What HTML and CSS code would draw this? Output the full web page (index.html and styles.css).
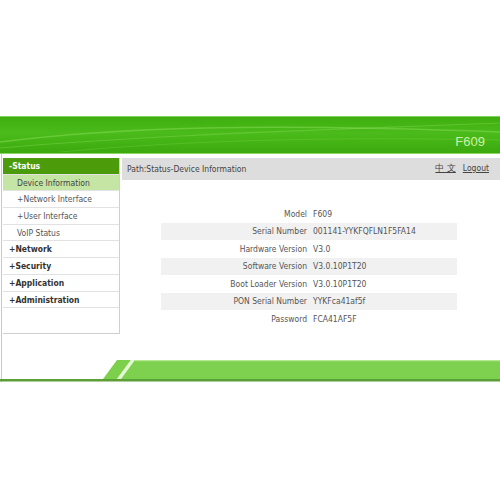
FILE: index.html
```html
<!DOCTYPE html>
<html lang="en">
<head>
  <meta charset="UTF-8">
  <title>F609</title>
  <link rel="stylesheet" href="styles.css">
</head>
<body>
  <div class="page">
    <!-- 상단 배너 -->
    <div class="banner">
      <svg class="waves" width="500" height="35" viewBox="0 0 500 35" preserveAspectRatio="none">
        <path d="M0 25 C120 10 260 6 500 15" stroke="#8fe060" stroke-opacity="0.45" stroke-width="1.5" fill="none"/>
        <path d="M0 31 C150 18 300 14 500 6" stroke="#8fe060" stroke-opacity="0.35" stroke-width="1.2" fill="none"/>
        <path d="M60 35 C200 22 350 20 500 23" stroke="#7dd850" stroke-opacity="0.3" stroke-width="1" fill="none"/>
      </svg>
      <span class="model-name">F609</span>
    </div>

    <div class="main">
      <!-- 좌측 메뉴 -->
      <div class="sidebar">
        <div class="nav-head">-Status</div>
        <div class="nav-sub active">Device Information</div>
        <div class="nav-sub">+Network Interface</div>
        <div class="nav-sub">+User Interface</div>
        <div class="nav-sub">VoIP Status</div>
        <div class="nav-top">+Network</div>
        <div class="nav-top">+Security</div>
        <div class="nav-top">+Application</div>
        <div class="nav-top">+Administration</div>
        <div class="nav-blank"></div>
      </div>

      <!-- 내용 -->
      <div class="content">
        <div class="pathbar">
          <span>Path:Status-Device Information</span>
          <span class="links"><a href="#">中 文</a><a href="#">Logout</a></span>
        </div>
        <table class="info">
          <tr><td class="label">Model</td><td>F609</td></tr>
          <tr><td class="label">Serial Number</td><td>001141-YYKFQFLN1F5FA14</td></tr>
          <tr><td class="label">Hardware Version</td><td>V3.0</td></tr>
          <tr><td class="label">Software Version</td><td>V3.0.10P1T20</td></tr>
          <tr><td class="label">Boot Loader Version</td><td>V3.0.10P1T20</td></tr>
          <tr><td class="label">PON Serial Number</td><td>YYKFca41af5f</td></tr>
          <tr><td class="label">Password</td><td>FCA41AF5F</td></tr>
        </table>
      </div>
    </div>

    <!-- 하단 바 -->
    <div class="footer">
      <svg width="500" height="22" viewBox="0 0 500 22">
        <polygon points="103,19 117,0 131,0 117,19" fill="#7cd04c"/>
        <polygon points="117,19 131,0 135,0 121,19" fill="#e2f7d2"/>
        <polygon points="121,19 135,0 500,0 500,19" fill="#7ed14e"/>
        <rect x="135" y="0" width="365" height="1.2" fill="#b4e892"/>
        <rect x="0" y="19" width="500" height="2.5" fill="#5c9e38"/>
      </svg>
    </div>
  </div>
</body>
</html>
```

FILE: styles.css
```css
/* 기본 */
html, body {
  margin: 0;
  padding: 0;
  background: #ffffff;
  font-family: 'DejaVu Sans Condensed', 'DejaVu Sans', sans-serif;
  font-size: 8.5px;
  color: #555;
}
*, *::before, *::after {
  box-sizing: border-box;
}
.page {
  padding-top: 116px;
}
/* 상단 배너 */
.banner {
  position: relative;
  height: 38px;
  background: linear-gradient(#3fae10, #4abb1a 45%, #3ca90e);
  border-top: 1px solid #7fd35a;
  border-bottom: 1px solid #8ad563;
  display: flex;
  justify-content: flex-end;
  align-items: flex-end;
}
.waves {
  position: absolute;
  left: 0;
  top: 0;
}
.model-name {
  position: relative;
  font-family: 'Liberation Sans', sans-serif;
  font-size: 13px;
  color: #c8f2a8;
  padding: 0 15px 4px 0;
}
/* 본문 */
.main {
  display: flex;
  gap: 2px;
  padding-top: 4px;
  margin-left: 1px;
  border-left: 1px solid #c8c8c8;
  height: 206px;
}
.sidebar {
  width: 117px;
  margin-left: 1px;
  border-right: 1px solid #cfcfcf;
  border-bottom: 1px solid #cfcfcf;
  align-self: flex-start;
}
.sidebar div {
  height: 16.7px;
  line-height: 16px;
  border-bottom: 1px solid #e2e2e2;
}
.nav-head {
  background: #4c9b0b;
  color: #ffffff;
  font-weight: bold;
  padding-left: 6px;
}
.nav-sub {
  padding-left: 14px;
  color: #555;
}
.nav-sub.active {
  background: #c4e5a4;
  color: #444;
}
.nav-top {
  padding-left: 6px;
  font-weight: bold;
  color: #333;
}
.sidebar .nav-blank {
  height: 25px;
  border-bottom: none;
}
.content {
  flex: 1;
}
.pathbar {
  height: 22px;
  background: #dddddd;
  display: flex;
  justify-content: space-between;
  align-items: center;
  padding: 0 11px 0 5px;
  color: #444;
}
.links a {
  color: #444;
  margin-left: 7px;
}
.info {
  border-collapse: collapse;
  width: 296px;
  margin: 25px 0 0 39px;
}
.info td {
  height: 17.5px;
  padding: 0 3px;
  color: #555;
}
.info tr:nth-child(even) td {
  background: #f1f1f1;
}
.info .label {
  width: 149px;
  text-align: right;
}
/* 하단 */
.footer {
  margin-left: 1px;
  border-left: 1px solid #c8c8c8;
  height: 22px;
}
.footer svg {
  display: block;
  margin-left: -2px;
}
```
